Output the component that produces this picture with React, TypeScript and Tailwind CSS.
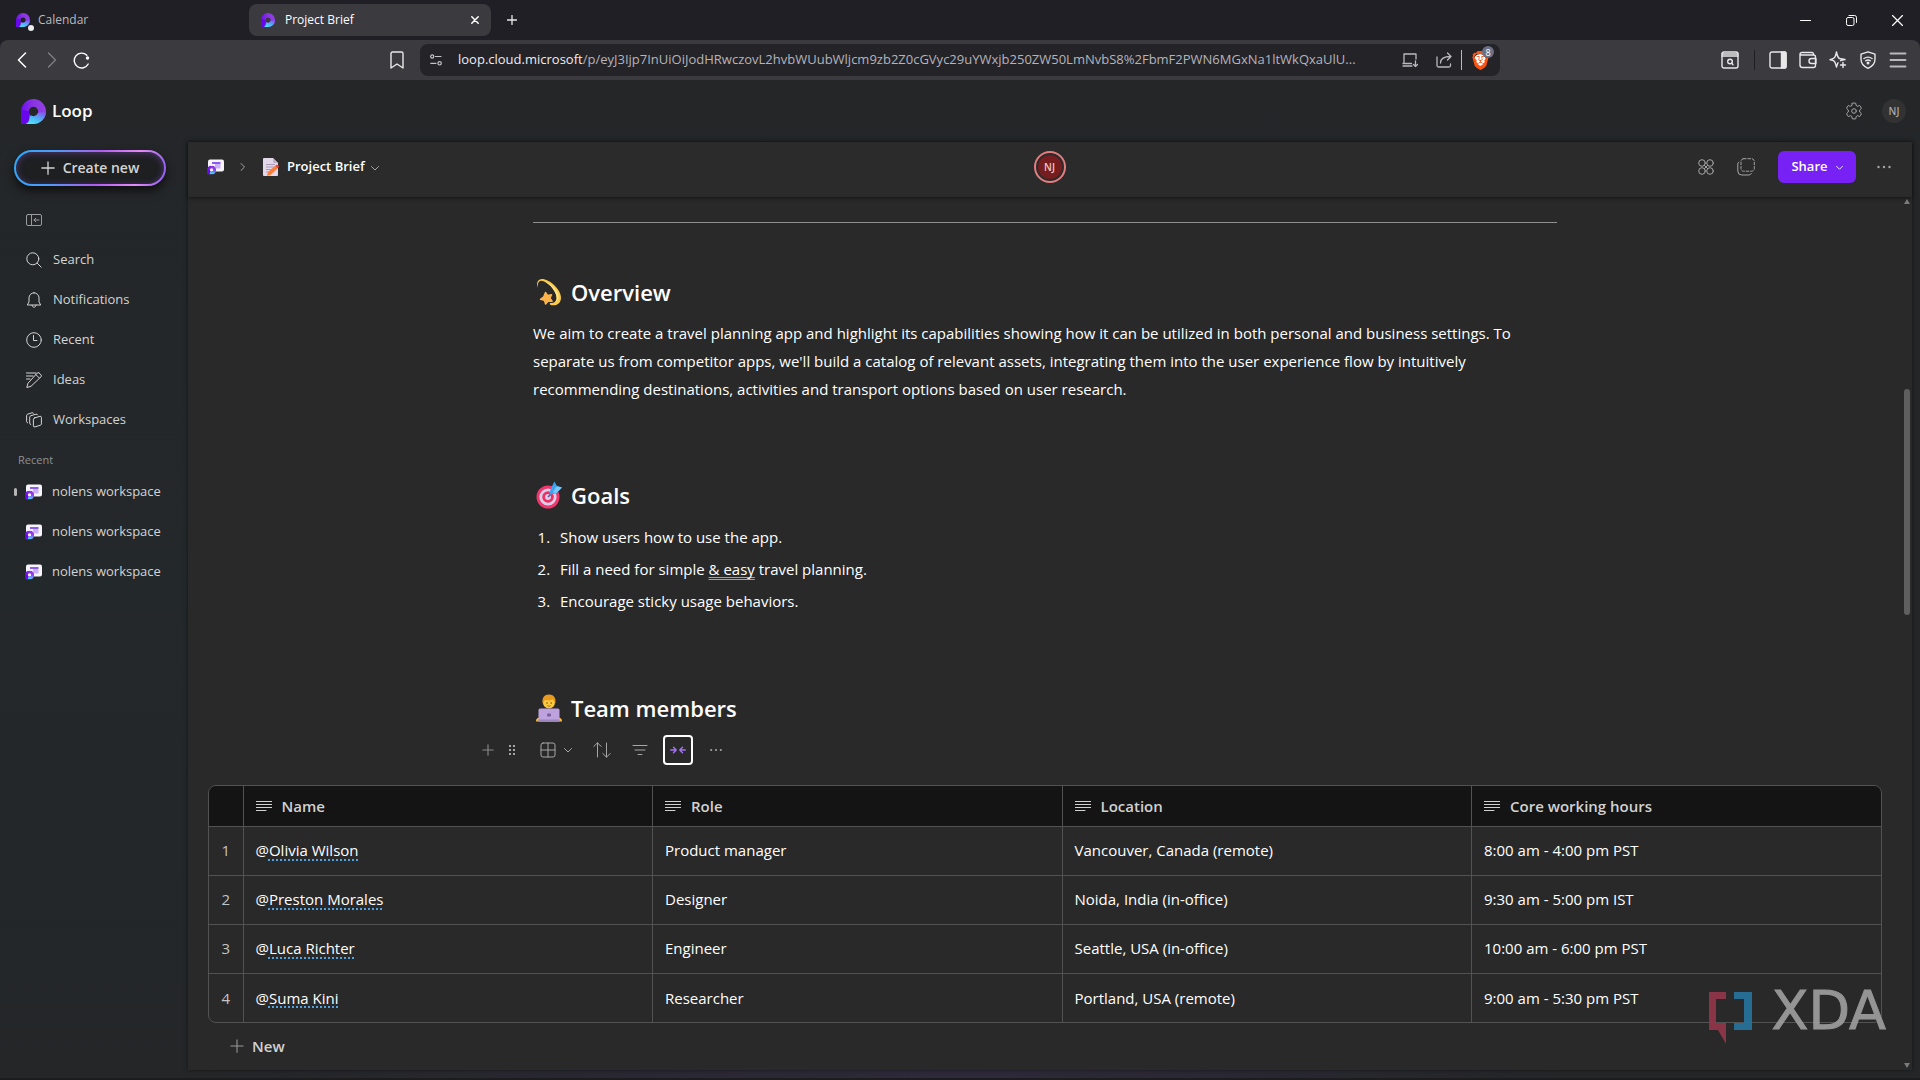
import React from 'react';
import { SiBrave } from 'react-icons/si';

const MEMBERS = [
  { name: 'Olivia Wilson', role: 'Product manager', location: 'Vancouver, Canada (remote)', hours: '8:00 am - 4:00 pm PST' },
  { name: 'Preston Morales', role: 'Designer', location: 'Noida, India (in-office)', hours: '9:30 am - 5:00 pm IST' },
  { name: 'Luca Richter', role: 'Engineer', location: 'Seattle, USA (in-office)', hours: '10:00 am - 6:00 pm PST' },
  { name: 'Suma Kini', role: 'Researcher', location: 'Portland, USA (remote)', hours: '9:00 am - 5:30 pm PST' },
];

const COLUMNS = ['Name', 'Role', 'Location', 'Core working hours'];

const URL_HOST = 'loop.cloud.microsoft';
const URL_PATH = '/p/eyJ3Ijp7InUiOiJodHRwczovL2hvbWUubWljcm9zb2Z0cGVyc29uYWxjb250ZW50LmNvbS8%2FbmF2PWN6MGxNa1ltWkQxaUlU...';

type IconProps = { className?: string; children?: React.ReactNode; box?: number; h?: number; sw?: number };

// Line icon, every stroke uses the current text colour
const Line = ({ className = 'size-4', children, box = 16, h = box, sw = 1 }: IconProps) => (
  <svg
    className={`shrink-0 ${className}`}
    viewBox={`0 0 ${box} ${h}`}
    fill="none"
    stroke="currentColor"
    strokeWidth={sw}
    strokeLinecap="round"
    strokeLinejoin="round"
    aria-hidden="true"
  >
    {children}
  </svg>
);

const ChevronDown = ({ className = 'size-2' }: IconProps) => (
  <Line className={className} box={8}>
    <path d="M.5 2.500 4 6l3.500-3.500" />
  </Line>
);

const Plus = ({ className = 'size-4', sw = 1.2 }: IconProps) => (
  <Line className={className} sw={sw}>
    <path d="M8 1v14M1 8h14" />
  </Line>
);

const Dots = ({ className = 'size-4' }: IconProps) => (
  <svg className={`shrink-0 ${className}`} viewBox="0 0 16 16" fill="currentColor" aria-hidden="true">
    <circle cx="2.500" cy="8" r="1.200" />
    <circle cx="8" cy="8" r="1.200" />
    <circle cx="13.500" cy="8" r="1.200" />
  </svg>
);

const LoopShape = ({ id }: { id: string }) => (
  <>
    <defs>
      <linearGradient id={`${id}-ring`} x1="0" y1="0" x2="1" y2="0">
        <stop offset="0" stopColor="#6d0ff2" />
        <stop offset=".5" stopColor="#8a35e0" />
        <stop offset="1" stopColor="#9340e6" />
      </linearGradient>
      <linearGradient id={`${id}-base`} x1=".2" y1="1" x2=".9" y2="0">
        <stop offset="0" stopColor="#4be8fa" />
        <stop offset=".45" stopColor="#4fb2f5" />
        <stop offset="1" stopColor="#8a48ea" />
      </linearGradient>
      <clipPath id={`${id}-clip`}>
        <path clipRule="evenodd" d="M0 24V12A12 12 0 1 1 12 24ZM12 7.500a4.500 4.500 0 1 0 0 9a4.500 4.500 0 0 0 0-9Z" />
      </clipPath>
    </defs>
    <g clipPath={`url(#${id}-clip)`}>
      <path d="M0 0h24v24H0Z" fill={`url(#${id}-ring)`} />
      <path d="M4 24C7 23 8 21 8 17l5-3 11-2v12Z" fill={`url(#${id}-base)`} />
      <path d="M0 24V10l8 2v5c0 4-2 7-5 7Z" fill="#6806ee" />
    </g>
  </>
);

const LoopLogo = ({ id, className }: { id: string; className: string }) => (
  <svg className={`shrink-0 ${className}`} viewBox="0 0 24 24" aria-hidden="true">
    <LoopShape id={id} />
  </svg>
);

const WorkspaceIcon = ({ id }: { id: string }) => (
  <svg className="h-4 w-[17px] shrink-0" viewBox="0 0 17 16" aria-hidden="true">
    <rect x="1" y=".5" width="16" height="12" rx="2" fill="#f7f4fb" />
    <rect x="5" y="3" width="8.500" height="2" fill="#8b5cf0" />
    <rect x="8" y="5" width="5.500" height="4.500" fill="#c9b0fb" />
    <g transform="translate(0 6.500) scale(.38)">
      <circle cx="12" cy="12" r="4.600" fill="#f7f4fb" />
      <LoopShape id={id} />
    </g>
  </svg>
);

const MemoIcon = () => (
  <svg className="h-[19px] w-4 shrink-0" viewBox="0 0 16 19" aria-hidden="true">
    <path d="M1 0h9l5 5v12a1 1 0 0 1-1 1H1a1 1 0 0 1-1-1V1a1 1 0 0 1 1-1Z" fill="#e2d8ea" />
    <path d="M10 0v4a1 1 0 0 0 1 1h4Z" fill="#bcaec9" />
    <path d="M3 6.500h9M3 9h8M3 11.500h5M3 14h3" stroke="#a99bb5" strokeWidth="1" />
    <path d="m5 14 7-6 2.500 2.500-7 6.500-3.500 1Z" fill="#fb7d3c" />
    <path d="m12 8 1.500-1.200q1.200-.5 2.200.7.600 1-.2 1.900L14.500 10.500Z" fill="#e8463f" />
  </svg>
);

const DizzyEmoji = () => (
  <svg className="size-7 shrink-0" viewBox="0 0 28 28" aria-hidden="true">
    <path d="M2.600 10C1 4.500 3 1 7 1c7 0 19 10 19 18.500 0 6.500-5 8.500-9.500 7.700-1.800-.3-2.300-1.400-1.300-2.200 4 .3 6.800-1.800 6.400-5.500C21 12 12 3 6.500 2.800 3.500 2.700 2.500 6 2.600 10Z" fill="#fbc94a" />
    <path d="M21.600 19.500C21 12 12 3 6.500 2.800c8 1 17.300 9.200 17.200 16.200-.1 4-3.400 6.200-8 6 4 .3 6.300-1.800 5.900-5.500Z" fill="#fde28a" />
    <path d="m10.500 14.500 2 3 4-.8-1.600 3.600 2.200 3-3.800-.2-2.700 2.900-1.100-3.600-4-1.100 3.300-2.500Z" fill="#fdb24a" stroke="#fdb24a" strokeWidth="1.500" strokeLinejoin="round" />
  </svg>
);

const TargetEmoji = () => (
  <svg className="size-7 shrink-0" viewBox="0 0 28 28" aria-hidden="true">
    <circle cx="13" cy="16" r="11.500" fill="#f0366c" />
    <circle cx="13" cy="16" r="8.600" fill="#d9cfe8" />
    <circle cx="13" cy="16" r="5.800" fill="#ee2f63" />
    <circle cx="13" cy="16" r="3" fill="#d9cfe8" />
    <path d="m13 16 6-6" stroke="#7a4a9a" strokeWidth="1.600" />
    <path d="M14.500 13.500 15.500 8l4-7.500 2 4L27 6.500l-6 6Z" fill="#3fa2ee" />
    <path d="m18 11 3.500-5.500L27 6.500l-6 6Z" fill="#78c8fb" />
  </svg>
);

const LaptopEmoji = () => (
  <svg className="size-7 shrink-0" viewBox="0 0 28 28" aria-hidden="true">
    <path d="M1 27.500c0-3 1.500-4 4-4h18c2.500 0 4 1 4 4Z" fill="#f8bd3c" />
    <circle cx="14" cy="8.500" r="6" fill="#fcc93c" />
    <path d="M7.600 9.500C6.800 3.500 9.500.6 14 .6S21.200 3.500 20.400 9.500c-.8-2.500-2-3.500-3-4-2.500 1.500-5 1-7 .5-1 .7-1.900 1.500-2.800 3.500Z" fill="#e89a20" />
    <circle cx="12" cy="9" r=".8" fill="#7a4a20" />
    <circle cx="16.200" cy="9" r=".8" fill="#7a4a20" />
    <path d="M12.300 11.700q1.700 1.200 3.400 0" stroke="#9b5a1c" strokeWidth=".8" fill="none" />
    <rect x="3.500" y="14.500" width="21" height="13" rx="1.500" fill="#bda2dd" />
    <rect x="3.500" y="25.500" width="21" height="2" fill="#9c86bd" />
    <rect x="12" y="19.500" width="4" height="3" rx=".8" fill="#7a5f9c" />
  </svg>
);

const TextColumnIcon = () => (
  <Line>
    <path d="M0 3.500h16M0 6.500h16M0 9.500h16M0 12.500h10" />
  </Line>
);

const NAV = [
  {
    label: 'Search',
    icon: (
      <Line>
        <circle cx="6.800" cy="6.800" r="6" />
        <path d="m11.200 11.200 4 4" />
      </Line>
    ),
  },
  {
    label: 'Notifications',
    icon: (
      <Line>
        <path d="M8 .8a5 5 0 0 0-5 5v4.100L1.300 13h13.400L13 9.900V5.800a5 5 0 0 0-5-5ZM6 13.200c.2 1.300 1 2 2 2s1.800-.7 2-2" />
      </Line>
    ),
  },
  {
    label: 'Recent',
    icon: (
      <Line>
        <circle cx="8" cy="8" r="7.300" />
        <path d="M7.500 3.500V8.500H11" />
      </Line>
    ),
  },
  {
    label: 'Ideas',
    icon: (
      <Line>
        <path d="M.5 1h9.500M.5 4h6.500M.5 7H4M13 .9l2.100 2.100q.7.900 0 1.700L5 14.300l-4.200 1.200L2 11.200 11.400.9q.8-.6 1.600 0ZM10 2.700l3.300 3.300" />
      </Line>
    ),
  },
  {
    label: 'Workspaces',
    icon: (
      <Line>
        <path d="M8.500 5.900 14 4.300q1.300-.2 1.400 1v6.600q0 1-1 1.300L9 14.900q-1.500.4-1.600-1V7.300q.1-1.100 1.100-1.400Z" />
        <path d="M4.700 12.500q-1-.2-1-1.200V5.200q0-1.100 1.200-1.500L10 2.200q1.300-.3 1.700.7M1.500 10.800q-.9-.2-.9-1.300V3.700q0-1.200 1.100-1.500L6 .8q1-.2 1.500.4" />
      </Line>
    ),
  },
];

const BrowserChrome = () => (
  <div className="bg-[#201f25] text-[13px] text-[#e8e8ea]">
    <div className="flex h-10 items-center">
      <a href="#calendar" className="flex w-[249px] items-center gap-2 pl-4 text-xs text-[#b9b9bd]">
        <span className="relative">
          <LoopLogo id="tab-a" className="size-[14px]" />
          <span className="absolute -right-1 -bottom-1 size-[6px] rounded-full bg-[#ececec]" />
        </span>
        Calendar
      </a>
      <div className="flex h-8 w-[242px] items-center gap-[10px] rounded-lg bg-[#3b3a3f] pr-2 pl-3 text-xs text-white">
        <LoopLogo id="tab-b" className="size-[14px]" />
        <span className="flex-1">Project Brief</span>
        <button aria-label="Close tab" className="grid w-4 place-items-center">
          <Line className="size-2" box={8} sw={1.5}>
            <path d="m.8.8 6.400 6.400M7.200.8.8 7.200" />
          </Line>
        </button>
      </div>
      <button aria-label="New tab" className="ml-4">
        <Line className="size-[10px]" box={10} sw={1.3}>
          <path d="M5 .5v9M.5 5h9" />
        </Line>
      </button>
      <div className="ml-auto flex text-white">
        <button aria-label="Minimize" className="grid w-[46px] place-items-center">
          <Line className="size-[11px]" box={11}>
            <path d="M.5 5.500h10" />
          </Line>
        </button>
        <button aria-label="Restore" className="grid w-[46px] place-items-center">
          <Line className="size-[11px]" box={11}>
            <path d="M.5 4q0-1.500 1.500-1.500h4.500q1.500 0 1.500 1.500v5q0 1.500-1.500 1.500H2Q.5 10.500.5 9ZM3 .5h5.500q2 0 2 2v5" />
          </Line>
        </button>
        <button aria-label="Close" className="grid w-[46px] place-items-center">
          <Line className="size-[11px]" box={11} sw={1.2}>
            <path d="m.5.5 10 10M10.500.5l-10 10" />
          </Line>
        </button>
      </div>
    </div>

    <div className="flex h-10 items-center rounded-t-lg bg-[#3b3a3f]">
      <div className="flex flex-1 items-center pr-4 pl-[17px]">
        <button aria-label="Back" className="text-white">
          <Line className="h-4 w-[10px]" box={10} h={16} sw={1.5}>
            <path d="M8.500 1 1.500 8l7 7" />
          </Line>
        </button>
        <button aria-label="Forward" className="ml-5 text-[#7d7c81]">
          <Line className="h-4 w-[10px]" box={10} h={16} sw={1.5}>
            <path d="m1.500 1 7 7-7 7" />
          </Line>
        </button>
        <button aria-label="Reload" className="ml-4 text-white">
          <Line className="size-[17px]" box={17} sw={1.4}>
            <path d="M13.800 3.200A7.400 7.400 0 1 0 15.200 12" />
            <circle cx="14.500" cy="6" r="1.700" fill="currentColor" stroke="none" />
          </Line>
        </button>
        <button aria-label="Bookmark" className="ml-auto">
          <Line className="h-[18px] w-[14px]" box={14} h={18} sw={1.4}>
            <path d="M2.500 1h9q1.500 0 1.500 1.500V17l-6-4-6 4V2.500Q1 1 2.500 1Z" />
          </Line>
        </button>
      </div>
      <div className="flex h-8 w-[1080px] items-center rounded-lg bg-[#242328] px-[10px]">
        <Line className="size-3 text-[#c4c4c8]" box={12} sw={1.2}>
          <circle cx="2.200" cy="2.500" r="1.600" />
          <path d="M5.500 2.500H11M.8 9.300H6" />
          <circle cx="9.600" cy="9.300" r="1.700" />
        </Line>
        <label htmlFor="address" className="ml-4 text-[13px] text-[#ededf0]">{URL_HOST}</label>
        <input id="address" type="text" defaultValue={URL_PATH} className="min-w-0 flex-1 bg-transparent text-[13px] text-[#b4b4ba] outline-none" />
        <button aria-label="Install app" className="text-[#b9b9be]">
          <Line className="size-4" sw={1.3}>
            <path d="M14 7V2H2v9M1 14h9M1 11.500h8.500M13.500 9v5.500M11.500 12.500l2 2 2-2" />
          </Line>
        </button>
        <button aria-label="Share page" className="ml-[18px] text-[#b9b9be]">
          <Line className="size-4" sw={1.3}>
            <path d="M1 5v8.500Q1 15 2.500 15H13q1.500 0 1.500-1.500V12M4.500 11Q4.500 4.500 14.500 4.500M11.500 1l3.500 3.500L11.500 8" />
          </Line>
        </button>
        <span className="mr-2 ml-[9px] h-5 w-px bg-[#b9b9be]" />
        <button aria-label="Brave Shields" className="relative grid h-5 w-5 place-items-center">
          <span className="absolute size-3 rounded-full bg-white" />
          <SiBrave className="relative size-[19px] text-[#fb5412]" />
          <span className="absolute -top-1 -right-1 grid size-3 place-items-center rounded-full bg-[#6b7084] text-[9px] leading-none text-white">8</span>
        </button>
      </div>
      <div className="flex flex-1 items-center justify-end gap-3 pr-[13px] pl-5">
        <button aria-label="Find in page">
          <Line className="size-[18px]" box={18} sw={1.4}>
            <rect x="1" y="1" width="16" height="16" rx="2" />
            <path d="M1 3h16M1 5h16" />
            <circle cx="9" cy="10.500" r="2.300" />
            <path d="m10.800 12.300 1.200 1.500" />
          </Line>
        </button>
        <span className="mr-[2px] ml-[3px] h-5 w-px bg-[#201f25]" />
        <button aria-label="Sidebar">
          <Line className="size-[18px]" box={18} sw={1.4}>
            <rect x="1" y="1" width="16" height="16" rx="2" />
            <path d="M12.500 1H16q1 0 1 1v14q0 1-1 1h-3.500Z" fill="currentColor" />
          </Line>
        </button>
        <button aria-label="Wallet">
          <Line className="size-[18px]" box={18} sw={1.4}>
            <path d="M14.500 4V3q0-1.500-1.500-1.500H3Q1 1.500 1 3.500V14q0 2.500 2.500 2.500h11q2 0 2-2v-8.500q0-2-2-2H3Q1 4 1 3M17 7.500h-4.500a2.500 2.500 0 0 0 0 5H17Z" />
          </Line>
        </button>
        <button aria-label="Assistant">
          <Line className="size-[18px]" box={18} sw={1.4}>
            <path d="M7.500 1Q8.500 6.500 10.500 7.500l5.500 1q-2.500.3-4.500 1.200M7.500 1Q6.500 6 5 7 4 8 1 8.700q3.300.6 4.300 1.500Q6.500 11.500 7.500 16q.8-2.600 1.500-4.200M14 11.500v5M11.500 14h5" />
          </Line>
        </button>
        <button aria-label="VPN">
          <Line className="size-[18px]" box={18} sw={1.4}>
            <path d="M9 .8 16 3.200V8Q16 14.500 9 17.300 2 14.500 2 8V3.200ZM5 7.500Q9 4.700 13 7.500M6.700 9.800Q9 8.200 11.300 9.800" />
            <circle cx="9" cy="12" r=".8" fill="currentColor" />
          </Line>
        </button>
        <button aria-label="Menu">
          <Line className="size-[18px] text-[#b9b9be]" box={18} sw={1.8}>
            <path d="M1.500 2.500h15M1.500 9h15M1.500 15.500h15" />
          </Line>
        </button>
      </div>
    </div>
  </div>
);

const Sidebar = () => (
  <nav className="w-[188px] shrink-0 px-[14px] pt-2 text-[13px] text-[#d4d4d4]">
    <button className="h-9 w-[152px] rounded-full bg-[linear-gradient(100deg,#2ba8fb,#4d9cfb_25%,#b05cf0_55%,#e58bf5_80%,#8a5cf0)] p-[2px] shadow-[0_5px_10px_rgba(0,0,0,0.6)]">
      <span className="flex h-full items-center justify-center gap-2 rounded-full bg-[#1d1f21] text-sm font-semibold shadow-[inset_0_1px_7px_rgba(150,90,220,0.4)]">
        <Plus className="size-[14px]" sw={1.5} />
        Create new
      </span>
    </button>
    <button aria-label="Collapse sidebar" className="mt-[14px] flex h-10 w-full items-center pl-3 text-[#9a9a9a]">
      <Line>
        <path d="M2 2.500h12q1.500 0 1.500 1.500v8q0 1.500-1.500 1.500H2Q.5 13.500.5 12V4q0-1.500 1.500-1.500ZM5.500 2.500v11M8 8h5M9.800 6.200 8 8l1.800 1.800" />
      </Line>
    </button>
    {NAV.map((item) => (
      <a key={item.label} href="#nav" className="flex h-10 items-center gap-[11px] pl-3">
        {item.icon}
        {item.label}
      </a>
    ))}
    <h2 className="pt-3 pb-1 pl-1 text-[11px] leading-4 text-[#8f9293]">Recent</h2>
    {['ws-a', 'ws-b', 'ws-c'].map((id, i) => (
      <a key={id} href="#workspace" className="relative flex h-10 items-center gap-[10px] pl-[11px]">
        {i === 0 && <span className="absolute left-0 h-2 w-[3px] rounded-full bg-[#b5b5b5]" />}
        <WorkspaceIcon id={id} />
        nolens workspace
      </a>
    ))}
  </nav>
);

const Toolbar = () => (
  <header className="flex h-[55px] items-center bg-[#2b2b2b] pr-5 pb-[5px] pl-[19px] text-[#a6a6a6] shadow-[0_1px_4px_rgba(0,0,0,0.5)]">
    <div className="flex flex-1 items-center">
      <WorkspaceIcon id="crumb" />
      <Line className="mr-[14px] ml-[15px] size-2" box={8}>
        <path d="M2 .5 5.500 4 2 7.500" />
      </Line>
      <button className="ml-[2px] flex items-center gap-2 text-[13px] font-semibold text-white">
        <MemoIcon />
        Project Brief
        <ChevronDown className="-ml-[2px] mt-px size-2 text-[#a6a6a6]" />
      </button>
    </div>
    <span className="grid size-8 place-items-center rounded-full border-2 border-[#e37d80]">
      <span className="grid size-6 place-items-center rounded-full bg-[#751d1f] text-[10px] font-semibold text-[#efc6c7]">NJ</span>
    </span>
    <div className="flex flex-1 items-center justify-end">
      <button aria-label="Components">
        <Line>
          <circle cx="4" cy="4" r="3.300" />
          <circle cx="12" cy="4" r="3.300" />
          <circle cx="4" cy="12" r="3.300" />
          <circle cx="12" cy="12" r="3.300" />
          <path d="m6.200 6.200 3.600 3.600M9.800 6.200 6.200 9.800" />
        </Line>
      </button>
      <button aria-label="Copy component" className="ml-[23px]">
        <Line className="size-[18px]" box={18}>
          <rect x="4" y=".7" width="13.300" height="12.500" rx="2.500" strokeDasharray="2.600 1.800" />
          <path d="M1.800 4Q.8 4.800.8 6v7q0 4 4 4h7q1.800 0 2.500-1.500" />
        </Line>
      </button>
      <button className="ml-[23px] flex h-8 w-[78px] items-center justify-center gap-2 rounded-md bg-[#7721f5] text-[13px] font-semibold text-white">
        Share
        <ChevronDown className="size-[7px]" />
      </button>
      <button aria-label="More options" className="ml-5">
        <Dots />
      </button>
    </div>
  </header>
);

const Heading = ({ icon, children }: { icon: React.ReactNode; children: React.ReactNode }) => (
  <h2 className="flex h-8 items-center gap-2 pl-[2px] text-[22px] font-semibold text-white">
    {icon}
    {children}
  </h2>
);

const TeamTable = () => (
  <div className="mt-5 overflow-hidden rounded-lg border border-[#525252]">
    <table className="w-full table-fixed border-collapse text-left text-[15px] text-white">
      <thead className="bg-[#141414] text-[#d1d1d1]">
        <tr className="h-10">
          <th className="w-[34px] border-b border-[#525252]" aria-label="Row" />
          {COLUMNS.map((column) => (
            <th key={column} scope="col" className="border-b border-l border-[#525252] px-3 font-semibold">
              <span className="flex items-center gap-[10px]">
                <TextColumnIcon />
                {column}
              </span>
            </th>
          ))}
        </tr>
      </thead>
      <tbody>
        {MEMBERS.map((member, i) => (
          <tr key={member.name} className="h-[49px] border-b border-[#525252] last:border-b-0">
            <td className="text-center text-[#c4c4c4]">{i + 1}</td>
            <td className="border-l border-[#525252] px-3">
              @<span className="underline decoration-[#4fa3e3] decoration-dotted decoration-2 underline-offset-[3px]">{member.name}</span>
            </td>
            <td className="border-l border-[#525252] px-3">{member.role}</td>
            <td className="border-l border-[#525252] px-3">{member.location}</td>
            <td className="border-l border-[#525252] px-3">{member.hours}</td>
          </tr>
        ))}
      </tbody>
    </table>
  </div>
);

const Document = () => (
  <div className="min-w-0 flex-1 px-5 pt-[25px]">
    <div className="mx-auto max-w-[1024px] text-[15px] text-white">
      <hr className="border-[#8f8f8f]" />
      <div className="mt-[53px]">
        <Heading icon={<DizzyEmoji />}>Overview</Heading>
        <p className="mt-[11px] leading-7">
          We aim to create a travel planning app and highlight its capabilities showing how it can be utilized in both personal and business settings. To separate us from competitor apps, we'll build a catalog of relevant assets, integrating them into the user experience flow by intuitively recommending destinations, activities and transport options based on user research.
        </p>
      </div>
      <div className="mt-[76px]">
        <Heading icon={<TargetEmoji />}>Goals</Heading>
        <ol className="mt-[10px] list-decimal pl-[21px] leading-8">
          <li className="pl-[6px]">Show users how to use the app.</li>
          <li className="pl-[6px]">
            Fill a need for simple <span className="underline decoration-[#8f9df0] decoration-double decoration-1 underline-offset-2 [text-decoration-skip-ink:none]">&amp; easy</span> travel planning.
          </li>
          <li className="pl-[6px]">Encourage sticky usage behaviors.</li>
        </ol>
      </div>
      <div className="mt-[75px]">
        <Heading icon={<LaptopEmoji />}>Team members</Heading>
      </div>
      <div className="mt-[11px] -ml-[51px] flex items-center text-[#a6a6a6]">
        <button aria-label="Add block" className="text-[#8a8a8a]">
          <Plus className="size-3" sw={1.5} />
        </button>
        <button aria-label="Drag block" className="ml-[14px]">
          <svg className="h-3 w-2" viewBox="0 0 8 12" fill="currentColor" aria-hidden="true">
            <path d="M1 1h2v2H1zM5 1h2v2H5zM1 5h2v2H1zM5 5h2v2H5zM1 9h2v2H1zM5 9h2v2H5z" />
          </svg>
        </button>
        <button aria-label="Table options" className="ml-6 flex items-center gap-2">
          <Line>
            <rect x="1" y="1" width="14" height="14" rx="2" />
            <path d="M8 1v14M1 8h14" />
          </Line>
          <ChevronDown className="size-2" />
        </button>
        <button aria-label="Sort" className="ml-[21px]">
          <Line className="size-[18px]" box={18}>
            <path d="M4.500 16V2M.8 5.500 4.500 1.800l3.700 3.700M13.500 2v14M9.800 12.500l3.700 3.700 3.700-3.700" />
          </Line>
        </button>
        <button aria-label="Filter" className="ml-[21px]">
          <Line>
            <path d="M1 3.500h14M3 8h10M6 12.500h4" />
          </Line>
        </button>
        <button aria-label="Fit table width" className="ml-[15px] grid size-[30px] place-items-center rounded-[4px] border-2 border-white text-[#a374f0]">
          <Line sw={1.4}>
            <path d="M.7 8H6M3.500 5.300 6.200 8 3.500 10.700M15.300 8H10M12.500 5.300 9.800 8l2.700 2.700" />
          </Line>
        </button>
        <button aria-label="More table options" className="ml-4">
          <Dots className="size-[14px]" />
        </button>
      </div>
    </div>
    <TeamTable />
    <button className="mt-[7px] flex h-8 items-center gap-2 pl-[22px] text-[15px] font-semibold text-[#d1d1d1]">
      <Plus className="size-[14px] text-[#9a9a9a]" />
      New
    </button>
  </div>
);

const ScrollTrack = () => (
  <div className="flex w-[10px] shrink-0 flex-col items-center pt-[2px] pb-[2px] text-[#7a7a7a]" aria-hidden="true">
    <svg className="size-[6px]" viewBox="0 0 6 6" fill="currentColor">
      <path d="M3 0 6 5H0Z" />
    </svg>
    <span className="mt-[184px] h-[226px] w-[6px] rounded-full bg-[#5f5f5f]" />
    <svg className="mt-auto size-[6px]" viewBox="0 0 6 6" fill="currentColor">
      <path d="M3 6 0 1h6Z" />
    </svg>
  </div>
);

const Watermark = () => (
  <div className="pointer-events-none absolute right-[26px] bottom-[26px] flex w-[177px] items-start justify-between opacity-90">
    <svg className="h-[52px] w-[43px]" viewBox="0 0 43 52" aria-hidden="true">
      <path d="M0 0h17v7H7v24h10v21L9 38H0Z" fill="#95364b" />
      <path d="M25 0h18v38H25v-7h10V7H25Z" fill="#27759f" />
    </svg>
    <span className="font-['DejaVu_Sans',sans-serif] text-[54px] leading-[38px] text-[#a0a0a0] [-webkit-text-stroke:1px_#a0a0a0]">XDA</span>
  </div>
);

export default function App() {
  return (
    <div className="flex min-h-screen flex-col bg-[#242628] font-['Open_Sans','Noto_Sans',sans-serif]">
      <BrowserChrome />
      <div className="flex flex-1 flex-col border-b-2 border-[#1c1c1e] bg-[linear-gradient(to_bottom,#242628,#23282b_50%,#242628)]">
        <header className="flex h-[62px] items-center justify-between pr-[14px] pl-[21px]">
          <div className="flex items-center gap-[6px] text-[17px] font-semibold text-white">
            <LoopLogo id="brand" className="size-[25px]" />
            Loop
          </div>
          <div className="flex items-center gap-[19px]">
            <button aria-label="Settings" className="text-[#a6a6a6]">
              <Line className="size-[18px]" box={18}>
                <path d="M7.300 1.200Q9 .8 10.700 1.200l.5 2.300 1.300.8 2.200-.8q1.200 1.200 1.700 2.900L14.700 8v2l1.700 1.600q-.5 1.700-1.700 2.900l-2.200-.8-1.300.8-.5 2.300q-1.700.4-3.400 0l-.5-2.300-1.300-.8-2.200.8Q2.100 13.300 1.600 11.600L3.300 10V8L1.600 6.400Q2.100 4.700 3.300 3.500l2.200.8 1.300-.8Z" />
                <circle cx="9" cy="9" r="2.300" />
              </Line>
            </button>
            <button aria-label="Account" className="grid size-6 place-items-center rounded-full bg-[#323232] text-[10px] font-semibold text-[#a6a6a6]">NJ</button>
          </div>
        </header>
        <div className="flex flex-1">
          <Sidebar />
          <div className="flex min-w-0 flex-1 flex-col bg-[linear-gradient(to_right,#242628,#2e2a3a_45%,#242628_80%)] pr-2 pb-2">
            <main className="relative flex flex-1 flex-col bg-[#292929] shadow-[0_0_4px_rgba(0,0,0,0.5)]">
              <Toolbar />
              <div className="flex flex-1">
                <Document />
                <ScrollTrack />
              </div>
              <Watermark />
            </main>
          </div>
        </div>
      </div>
    </div>
  );
}
